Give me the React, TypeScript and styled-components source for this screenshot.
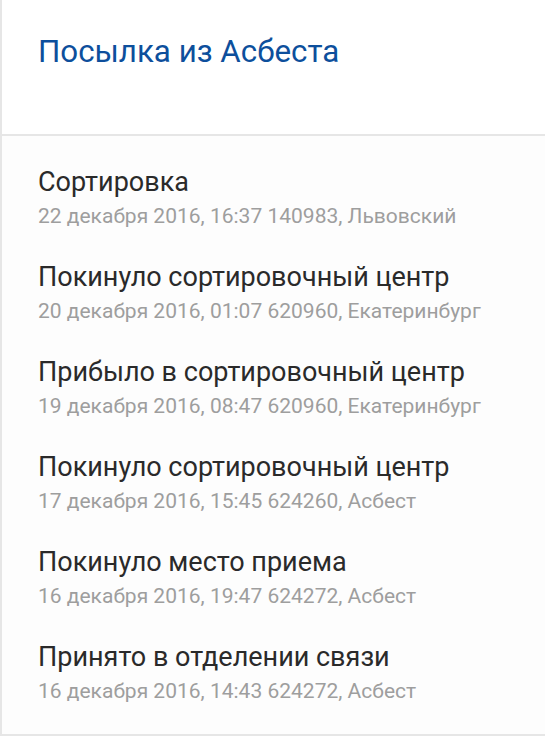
import React from "react";
import styled, { createGlobalStyle } from "styled-components";

const Global = createGlobalStyle`
  html, body { margin: 0; padding: 0; background: #ffffff; }
  body { font-family: Roboto, "Noto Sans", Arial, sans-serif; }
`;

const Card = styled.div`
  width: 545px;
  box-sizing: border-box;
  background: #ffffff;
  border-left: 2px solid #e6e6e6;
  border-bottom: 2px solid #e6e6e6;
`;

const Header = styled.header`
  height: 136px;
  box-sizing: border-box;
  padding: 34px 0 0 36px;
  border-bottom: 2px solid #e6e6e6;
`;

const Title = styled.h1`
  margin: 0;
  font-size: 31.3px;
  font-weight: 400;
  line-height: 36px;
  color: #0d4f9c;
`;

const List = styled.ul`
  list-style: none;
  margin: 0;
  padding: 30px 0 30px 36px;
  display: flex;
  flex-direction: column;
  gap: 32px;
  background: #fdfdfd;
`;

const Item = styled.li`
  display: flex;
  flex-direction: column;
  gap: 5px;
`;

const ItemTitle = styled.div`
  font-size: 27px;
  line-height: 32px;
  color: #2a2a2a;
`;

const ItemMeta = styled.div`
  font-size: 21px;
  line-height: 26px;
  color: #9e9e9e;
`;

const events = [
  { t: "Сортировка", m: "22 декабря 2016, 16:37 140983, Львовский" },
  { t: "Покинуло сортировочный центр", m: "20 декабря 2016, 01:07 620960, Екатеринбург" },
  { t: "Прибыло в сортировочный центр", m: "19 декабря 2016, 08:47 620960, Екатеринбург" },
  { t: "Покинуло сортировочный центр", m: "17 декабря 2016, 15:45 624260, Асбест" },
  { t: "Покинуло место приема", m: "16 декабря 2016, 19:47 624272, Асбест" },
  { t: "Принято в отделении связи", m: "16 декабря 2016, 14:43 624272, Асбест" },
];

export default function App() {
  return (
    <>
      <Global />
      <Card>
        <Header>
          <Title>Посылка из Асбеста</Title>
        </Header>
        <List>
          {events.map((e, i) => (
            <Item key={i}>
              <ItemTitle>{e.t}</ItemTitle>
              <ItemMeta>{e.m}</ItemMeta>
            </Item>
          ))}
        </List>
      </Card>
    </>
  );
}
